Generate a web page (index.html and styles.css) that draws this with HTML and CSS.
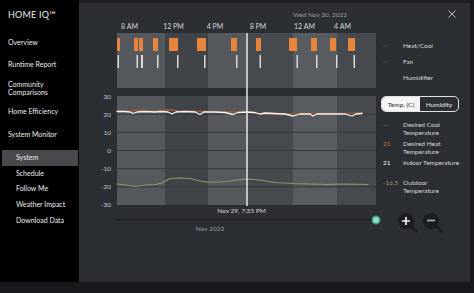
FILE: index.html
```html
<!DOCTYPE html>
<html lang="en">
<head>
    <meta charset="UTF-8">
    <meta name="viewport" content="width=device-width, initial-scale=1">
    <title>Home IQ - System</title>
    <link rel="stylesheet" href="styles.css">
</head>
<body>
    <div class="screen">
        <!-- Left menu -->
        <nav class="sidebar">
            <div class="brand">HOME IQ™</div>
            <ul class="nav">
                <li class="nav-item overview">Overview</li>
                <li class="nav-item runtime">Runtime Report</li>
                <li class="nav-item community">Community<br>Comparisons</li>
                <li class="nav-item efficiency">Home Efficiency</li>
                <li class="nav-item monitor">System Monitor</li>
            </ul>
            <ul class="subnav">
                <li class="sub-item active">System</li>
                <li class="sub-item">Schedule</li>
                <li class="sub-item">Follow Me</li>
                <li class="sub-item">Weather Impact</li>
                <li class="sub-item">Download Data</li>
            </ul>
        </nav>

        <main class="main">
            <!-- Chart column -->
            <div class="chart-col">
                <svg class="chart" width="300" height="237" viewBox="79 3 300 237">
                    <text class="day" x="320" y="17">Wed Nov 30, 2022</text>
                    <g class="hours">
                        <text x="129.5" y="28.5">8 AM</text>
                        <text x="173.5" y="28.5">12 PM</text>
                        <text x="215" y="28.5">4 PM</text>
                        <text x="258" y="28.5">8 PM</text>
                        <text x="304.5" y="28.5">12 AM</text>
                        <text x="342.5" y="28.5">4 AM</text>
                    </g>

                    <!-- equipment strip -->
                    <rect x="117" y="33" width="48" height="55" fill="#55585c"/>
                    <rect x="165" y="33" width="43" height="55" fill="#404347"/>
                    <rect x="208" y="33" width="39" height="55" fill="#55585c"/>
                    <rect x="247" y="33" width="46" height="55" fill="#46494d"/>
                    <rect x="293" y="33" width="44" height="55" fill="#585b5f"/>
                    <rect x="337" y="33" width="39" height="55" fill="#46494d"/>

                    <g class="heat">
                        <rect x="117" y="38" width="3" height="13"/>
                        <rect x="134" y="38" width="4" height="13"/>
                        <rect x="139" y="38" width="4" height="13"/>
                        <rect x="153" y="38" width="5" height="13"/>
                        <rect x="169" y="38" width="9" height="13"/>
                        <rect x="197" y="38" width="9" height="13"/>
                        <rect x="231" y="38" width="6" height="13"/>
                        <rect x="256" y="38" width="5" height="13"/>
                        <rect x="289" y="38" width="8" height="13"/>
                        <rect x="311" y="38" width="6" height="13"/>
                        <rect x="330" y="38" width="6" height="13"/>
                        <rect x="348" y="38" width="7" height="13"/>
                    </g>
                    <g class="fan">
                        <rect x="117.5" y="55" width="1.5" height="13"/>
                        <rect x="136.5" y="55" width="1.5" height="13"/>
                        <rect x="141" y="55" width="2" height="13"/>
                        <rect x="157" y="55" width="1.5" height="13"/>
                        <rect x="177" y="55" width="1.5" height="13"/>
                        <rect x="204" y="55" width="1.5" height="13"/>
                        <rect x="236" y="55" width="1.5" height="13"/>
                        <rect x="259.5" y="55" width="1.5" height="13"/>
                        <rect x="296.5" y="55" width="1.5" height="13"/>
                        <rect x="316" y="55" width="1.5" height="13"/>
                        <rect x="336" y="55" width="1.5" height="13"/>
                        <rect x="353.5" y="55" width="1.5" height="13"/>
                    </g>

                    <!-- temperature chart -->
                    <rect x="117" y="96" width="48" height="109" fill="#55585c"/>
                    <rect x="165" y="96" width="43" height="109" fill="#404347"/>
                    <rect x="208" y="96" width="39" height="109" fill="#55585c"/>
                    <rect x="247" y="96" width="46" height="109" fill="#46494d"/>
                    <rect x="293" y="96" width="44" height="109" fill="#585b5f"/>
                    <rect x="337" y="96" width="39" height="109" fill="#46494d"/>

                    <g class="grid">
                        <line x1="117" y1="114.2" x2="376" y2="114.2"/>
                        <line x1="117" y1="132.3" x2="376" y2="132.3"/>
                        <line x1="117" y1="150.5" x2="376" y2="150.5"/>
                        <line x1="117" y1="168.7" x2="376" y2="168.7"/>
                        <line x1="117" y1="186.8" x2="376" y2="186.8"/>
                    </g>
                    <g class="ticks">
                        <text x="111" y="98.5">30</text>
                        <text x="111" y="116.5">20</text>
                        <text x="111" y="134.5">10</text>
                        <text x="111" y="152.5">0</text>
                        <text x="111" y="170.5">-10</text>
                        <text x="111" y="188.5">-20</text>
                        <text x="111" y="207">-30</text>
                    </g>

                    <polyline class="line-outdoor" points="117,184 125,185 135,186.5 145,185 155,184.5 162,183 170,178.5 180,178 190,178.5 200,181 207,182 220,182 230,181 240,179.5 250,179 263,180.5 275,182.5 285,183 293,183.5 310,184 327,184.5 345,184 368,184.5"/>
                    <polyline class="line-heat" points="117,111.2 130,111.2 136,110 142,110.2 150,111 160,111 166,110 172,109.8 178,111 190,111.2 205,111.5 225,111.8 247,112 258,113.8 270,114.6 282,114.4 300,113.5 330,113.4 352,113.3 362,112.8"/>
                    <polyline class="line-indoor" points="117,111.5 125,111.5 130,112 133,113.5 137,112 145,111.5 155,112 160,111.5 168,112 172,114 176,112 185,111.5 195,112 200,114.5 204,112 215,112 225,112.5 233,114.5 238,112.5 247,112 255,112.5 260,114 265,113 275,113.5 285,114 293,116 300,114 310,114 313,116 317,114 330,114 345,114 352,116 356,114 362,113.5"/>

                    <!-- cursor -->
                    <line class="cursor" x1="247" y1="33" x2="247" y2="206"/>
                    <text class="cursor-label" x="241.5" y="213">Nov 29, 7:35 PM</text>

                    <!-- range slider -->
                    <line class="track" x1="116" y1="219.5" x2="376" y2="219.5"/>
                    <circle cx="376" cy="220" r="4.5" fill="#3f9a80"/>
                    <circle cx="376" cy="220" r="3" fill="#8fe3c8"/>
                    <text class="month" x="210" y="231">Nov 2022</text>
                </svg>
            </div>

            <!-- Legend column -->
            <aside class="legend">
                <div class="close-row">
                    <svg width="8" height="8" viewBox="0 0 8 8"><path d="M0.5 0.5 L7.5 7.5 M7.5 0.5 L0.5 7.5" stroke="#cfcfcf" stroke-width="0.9"/></svg>
                </div>

                <ul class="events">
                    <li><span class="val dim">--</span>Heat/Cool</li>
                    <li><span class="val dim">--</span>Fan</li>
                    <li><span class="val"></span>Humidifier</li>
                </ul>

                <div class="toggle">
                    <span class="toggle-on">Temp. (C)</span>
                    <span class="toggle-off">Humidity</span>
                </div>

                <ul class="series">
                    <li class="cool"><span class="val dim">--</span><span>Desired Cool<br>Temperature</span></li>
                    <li class="heat-item"><span class="val orange">21</span><span>Desired Heat<br>Temperature</span></li>
                    <li class="indoor"><span class="val white">21</span><span>Indoor Temperature</span></li>
                    <li class="outdoor"><span class="val olive">-16.5</span><span>Outdoor<br>Temperature</span></li>
                </ul>

                <div class="zoom-row">
                    <svg width="22" height="22" viewBox="0 0 22 22">
                        <line x1="14" y1="14" x2="19.5" y2="19.5" stroke="#1b1d20" stroke-width="2.6" stroke-linecap="round"/>
                        <circle cx="9" cy="9" r="8" fill="#1b1d20"/>
                        <path d="M9 5 V13 M5 9 H13" stroke="#f2f2f2" stroke-width="1.7"/>
                    </svg>
                    <svg width="22" height="22" viewBox="0 0 22 22">
                        <line x1="14" y1="14" x2="19.5" y2="19.5" stroke="#1b1d20" stroke-width="2.6" stroke-linecap="round"/>
                        <circle cx="9" cy="9" r="8" fill="#1b1d20"/>
                        <path d="M5 8.5 H13" stroke="#a9abad" stroke-width="1.7"/>
                    </svg>
                </div>
            </aside>
        </main>
    </div>
</body>
</html>
```

FILE: styles.css
```css
body {
    margin: 0;
    background-color: #16181c;
    font-family: Lato, "Open Sans", sans-serif;
}

ul {
    list-style: none;
    margin: 0;
    padding: 0;
}

.screen {
    display: flex;
    width: 470px;
    height: 282px;
}

/* Left menu */
.sidebar {
    width: 79px;
    background-color: #000;
    color: #ececec;
}

.brand {
    font-size: 9px;
    line-height: 12px;
    padding: 9px 0 0 8px;
    letter-spacing: 0.2px;
}

.nav-item {
    font-size: 7px;
    line-height: 8px;
    padding-left: 8px;
}

.overview { margin-top: 17px; }
.runtime { margin-top: 14px; }
.community { margin-top: 12px; }
.efficiency { margin-top: 11px; }
.monitor { margin-top: 15px; }

.subnav {
    margin-top: 12px;
}

.sub-item {
    font-size: 7px;
    line-height: 15.7px;
    margin-left: 2px;
    width: 76px;
    padding-left: 14px;
    box-sizing: border-box;
}

.sub-item.active {
    background-color: #48494d;
}

/* Main panel */
.main {
    flex: 1;
    display: flex;
    background-color: #2b2e33;
    border-top: 3px solid #1c1e22;
}

.chart-col {
    width: 300px;
}

.chart {
    display: block;
    overflow: visible;
    font-family: Lato, "Open Sans", sans-serif;
}

.chart .day {
    font-size: 6.5px;
    fill: #9a9ca0;
    text-anchor: middle;
}

.chart .hours text {
    font-size: 7px;
    fill: #d4d6d8;
    text-anchor: middle;
}

.chart .heat rect {
    fill: #e8843b;
}

.chart .fan rect {
    fill: #d9d9d9;
}

.chart .grid line {
    stroke: #35383c;
    stroke-width: 1;
}

.chart .ticks text {
    font-size: 6.5px;
    fill: #c9cbcd;
    text-anchor: end;
}

.line-outdoor,
.line-heat,
.line-indoor {
    fill: none;
    stroke-linejoin: round;
    stroke-linecap: round;
}

.line-outdoor {
    stroke: #849c62;
    stroke-width: 1.2;
}

.line-heat {
    stroke: #9c5a36;
    stroke-width: 1.5;
}

.line-indoor {
    stroke: #f4f4f4;
    stroke-width: 1.3;
}

.cursor {
    stroke: #f2f2f2;
    stroke-width: 1.4;
}

.cursor-label,
.month {
    font-size: 6.5px;
    text-anchor: middle;
}

.cursor-label {
    fill: #dadada;
}

.month {
    fill: #9a9ca0;
}

.track {
    stroke: #1d1f23;
    stroke-width: 1.6;
}

/* Legend */
.legend {
    flex: 1;
    color: #d8d8d8;
    font-size: 6.5px;
    padding-left: 4px;
}

.close-row {
    display: flex;
    justify-content: flex-end;
    padding-right: 14px;
    margin-top: 7px;
}

.close-row svg {
    display: block;
}

.events {
    margin-top: 24px;
}

.events li {
    display: flex;
    line-height: 8px;
    margin-bottom: 8px;
}

.val {
    width: 20px;
    flex-shrink: 0;
}

.dim {
    color: #85878a;
}

.orange {
    color: #c8743f;
}

.white {
    color: #f4f4f4;
}

.olive {
    color: #9c9a6e;
}

.toggle {
    display: flex;
    width: 78px;
    height: 16px;
    margin: 14px 0 0 -2px;
    border: 1px solid #e2e2e2;
    border-radius: 5px;
    box-sizing: border-box;
    overflow: hidden;
}

.toggle span {
    flex: 1;
    display: flex;
    align-items: center;
    justify-content: center;
}

.toggle-on {
    background-color: #f5f5f5;
    color: #2b2e33;
}

.toggle-off {
    color: #e8e8e8;
}

.series li {
    display: flex;
    line-height: 7.5px;
}

.cool { margin-top: 9.25px; }
.heat-item { margin-top: 4px; }
.indoor { margin-top: 4px; }
.outdoor { margin-top: 12.5px; }

.zoom-row {
    display: flex;
    gap: 3px;
    margin: 18px 0 0 14px;
}

.zoom-row svg {
    display: block;
}
```
